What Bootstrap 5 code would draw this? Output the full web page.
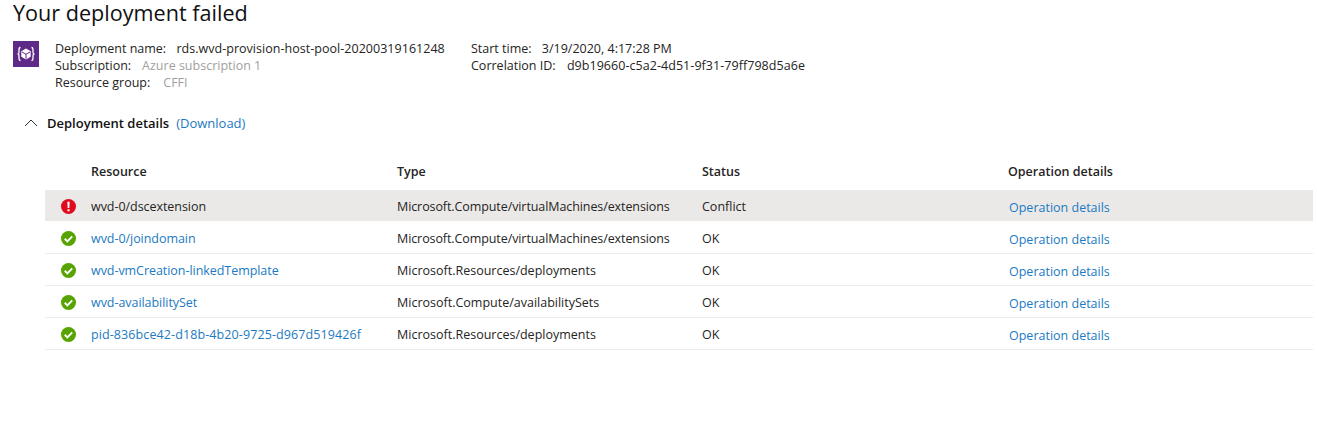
<!DOCTYPE html>
<html lang="en"><head><meta charset="utf-8"><title>Deployment</title>
<link href="https://cdn.jsdelivr.net/npm/bootstrap@5.3.0/dist/css/bootstrap.min.css" rel="stylesheet">
<style>
body{font-family:"Open Sans","Liberation Sans",sans-serif;font-size:12.5px;color:#252423;background:#fff;height:444px;overflow:hidden}
.ttl{font-size:21.6px;line-height:28px;margin:-1px 0 0;padding-left:13px;color:#111;font-weight:400}
.sumry{padding-left:13px;margin-top:13px;line-height:17px}
.lg{width:26px;height:26px;background:#5f2a87;margin-right:16px;margin-top:1px}
.col1{width:416px}
.lbl{margin-right:7px}
.val1{letter-spacing:.03px}
.val2{letter-spacing:.05px;margin-left:1px}
.mut{color:#a19f9d;margin-left:4px}
.mut2{margin-left:6px}
.det{padding-left:24px;margin-top:23px;line-height:18px;font-size:13px}
.det b{font-weight:600;margin-left:9px;margin-right:8px;color:#111}
.det a{margin-left:-1px}
a{color:#1b7ac2;text-decoration:none}
.tb{margin:25px 4px 0 45px}
.rw{height:32px;border-bottom:1px solid #edebe9;align-items:center;padding-top:4px}
.rw.hd{height:33px;border:0;padding:0 0 3px;font-weight:600;color:#252423}
.rw.sel{background:#ebe9e8;border-bottom-color:#fff}
.c0{width:46px;padding-left:15.500px;padding-bottom:2px;line-height:0}
.c1{width:306px;letter-spacing:-.05px}.c2{width:305px}.c3{width:306px}
.hd .c1{letter-spacing:0}
.c1 .pidl{letter-spacing:.1px}
.c2 .extl{letter-spacing:-.09px}
.c4{padding-left:1px;padding-top:2px}
.hd .c4{padding:0}
</style></head><body>
<h1 class="ttl">Your deployment failed</h1>
<div class="sumry d-flex">
<div class="lg d-flex align-items-center justify-content-center"><svg width="20" height="20" viewBox="0 0 20 20" fill="none" stroke="#fff"><path d="M4.500 3.500C3 3.500 3 4.500 3 6v2.500C3 9.500 2.500 10 1.500 10c1 0 1.500.5 1.500 1.500V14c0 1.500 0 2.500 1.500 2.500M15.500 3.500c1.500 0 1.500 1 1.500 2.500v2.500c0 1 .5 1.500 1.500 1.500-1 0-1.500.5-1.500 1.500V14c0 1.500 0 2.500-1.500 2.500" stroke-width="1.300"/><path d="M10 4.500l4.700 2.700v5.600L10 15.500l-4.700-2.700V7.200z" fill="#fff" stroke="none"/><path d="M6 8l4 2.300L14 8M10 10.300v4.500" stroke="#5f2a87" stroke-width="1"/></svg></div>
<div class="col1"><div><span class="lbl">Deployment name:</span> <span class="val1">rds.wvd-provision-host-pool-20200319161248</span></div><div><span class="lbl">Subscription:</span><span class="mut">Azure subscription 1</span></div><div><span class="lbl">Resource group:</span><span class="mut mut2">CFFI</span></div></div>
<div><div><span class="lbl">Start time:</span> 3/19/2020, 4:17:28 PM</div><div><span class="lbl">Correlation ID:</span> <span class="val2">d9b19660-c5a2-4d51-9f31-79ff798d5a6e</span></div></div>
</div>
<div class="det d-flex align-items-center"><svg width="14" height="14" viewBox="0 0 14 14" fill="none" stroke="#333" stroke-width="1"><path d="M1 10l6-6 6 6"/></svg><b>Deployment details</b><a href="#">(Download)</a></div>
<div class="tb">
<div class="d-flex rw hd"><div class="c0"></div><div class="c1">Resource</div><div class="c2">Type</div><div class="c3">Status</div><div class="c4">Operation details</div></div>
<div class="d-flex rw sel"><div class="c0"><svg width="15" height="15" viewBox="0 0 16 16"><circle cx="8" cy="8" r="8" fill="#e00b1c"/><path d="M6.800 3h2.400l-.3 6.500H7.100zM6.900 10.800h2.200V13H6.900z" fill="#fff"/></svg></div><div class="c1">wvd-0/dscextension</div><div class="c2"><span class="extl">Microsoft.Compute/virtualMachines/extensions</span></div><div class="c3">Conflict</div><div class="c4"><a href="#">Operation details</a></div></div>
<div class="d-flex rw"><div class="c0"><svg width="15" height="15" viewBox="0 0 16 16"><circle cx="8" cy="8" r="8" fill="#57a300"/><path d="M4 8.300l2.800 2.800L12 5.800" fill="none" stroke="#fff" stroke-width="2"/></svg></div><div class="c1"><a href="#">wvd-0/joindomain</a></div><div class="c2"><span class="extl">Microsoft.Compute/virtualMachines/extensions</span></div><div class="c3">OK</div><div class="c4"><a href="#">Operation details</a></div></div>
<div class="d-flex rw"><div class="c0"><svg width="15" height="15" viewBox="0 0 16 16"><circle cx="8" cy="8" r="8" fill="#57a300"/><path d="M4 8.300l2.800 2.800L12 5.800" fill="none" stroke="#fff" stroke-width="2"/></svg></div><div class="c1"><a href="#">wvd-vmCreation-linkedTemplate</a></div><div class="c2">Microsoft.Resources/deployments</div><div class="c3">OK</div><div class="c4"><a href="#">Operation details</a></div></div>
<div class="d-flex rw"><div class="c0"><svg width="15" height="15" viewBox="0 0 16 16"><circle cx="8" cy="8" r="8" fill="#57a300"/><path d="M4 8.300l2.800 2.800L12 5.800" fill="none" stroke="#fff" stroke-width="2"/></svg></div><div class="c1"><a href="#">wvd-availabilitySet</a></div><div class="c2">Microsoft.Compute/availabilitySets</div><div class="c3">OK</div><div class="c4"><a href="#">Operation details</a></div></div>
<div class="d-flex rw"><div class="c0"><svg width="15" height="15" viewBox="0 0 16 16"><circle cx="8" cy="8" r="8" fill="#57a300"/><path d="M4 8.300l2.800 2.800L12 5.800" fill="none" stroke="#fff" stroke-width="2"/></svg></div><div class="c1"><a class="pidl" href="#">pid-836bce42-d18b-4b20-9725-d967d519426f</a></div><div class="c2">Microsoft.Resources/deployments</div><div class="c3">OK</div><div class="c4"><a href="#">Operation details</a></div></div>
</div>
<script src="https://cdn.jsdelivr.net/npm/bootstrap@5.3.0/dist/js/bootstrap.bundle.min.js"></script>
</body></html>
